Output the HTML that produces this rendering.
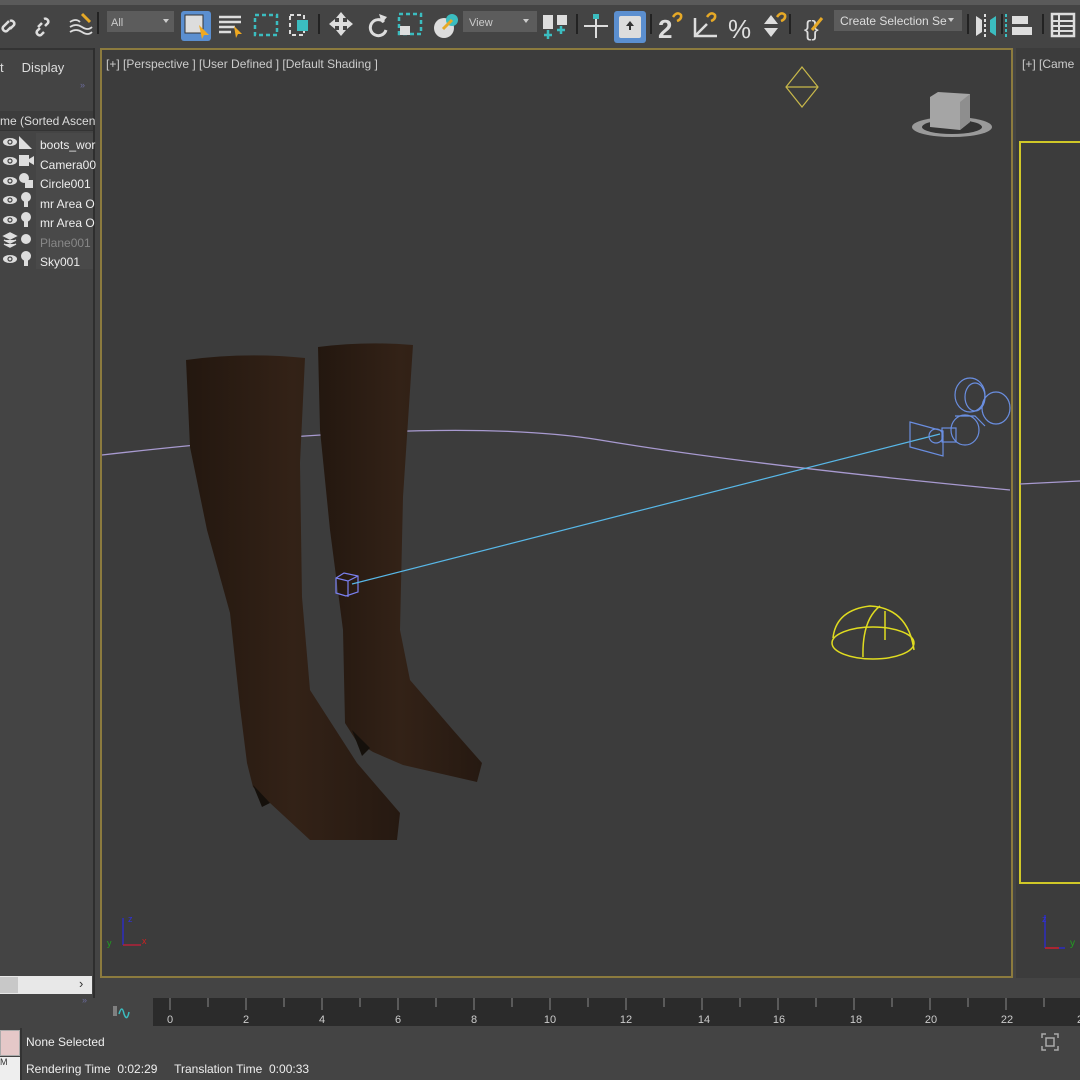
<!DOCTYPE html>
<html><head><meta charset="utf-8">
<style>
*{margin:0;padding:0;box-sizing:border-box}
body{width:1080px;height:1080px;overflow:hidden;background:#444444;font-family:"Liberation Sans",sans-serif;color:#ddd;position:relative;font-size:12px}
.a{position:absolute}
.t{position:absolute;white-space:nowrap}
</style></head><body>
<div class="a" style="left:0;top:0;width:1080px;height:5px;background:#5a5a5a"></div>
<div class="a" style="left:0;top:5px;width:1080px;height:41px;background:#444"></div>
<svg class="a" style="left:0;top:0" width="1080" height="48">
 <g fill="none" stroke="#ddd" stroke-width="2.5">
  <path d="M3 27 l6-6 M10 21 a3 3 0 0 1 4 4 l-4 4 M5 25 l-2 2 a3 3 0 0 0 4 4 l4-4"/>
  <path d="M38 27 l4-4 M44 19 a3 3 0 0 1 4 4 l-3 3 M40 28 l-3 3 a3 3 0 0 0 4 4 l3-3" />
  <path d="M70 27 q6 -4 12 0 q6 4 10 0 M70 32 q6 -4 12 0 q6 4 10 0 M70 22 q6-4 10 0" stroke-width="1.8"/>
 </g>
 <path d="M82 14 l8 8" stroke="#e6a927" stroke-width="3"/>
 <line x1="98" y1="12" x2="98" y2="34" stroke="#222" stroke-width="2"/>
 <rect x="107" y="11" width="67" height="21" fill="#5c5c5c"/>
 <text x="111" y="26" fill="#ccc" font-size="11" font-family="Liberation Sans">All</text>
 <path d="M163 19 l6 0 l-3 4z" fill="#ccc"/>
 <rect x="181" y="11" width="30" height="30" rx="3" fill="#5b8fd0"/>
 <rect x="185" y="15" width="18" height="18" fill="#ddd" stroke="#333"/>
 <path d="M199 25 l10 10 l-5 0 l-2 4z" fill="#f0a920"/>
 <path d="M219 17h22M219 22h22M219 27h16M219 32h12" stroke="#ddd" stroke-width="2.5"/>
 <path d="M234 26 l8 8 l-4 0 l-2 4z" fill="#f0a920"/>
 <rect x="255" y="15" width="22" height="20" fill="none" stroke="#3bbdc0" stroke-width="2.5" stroke-dasharray="4 3"/>
 <rect x="290" y="15" width="14" height="20" fill="none" stroke="#ddd" stroke-width="2" stroke-dasharray="4 3"/>
 <rect x="297" y="20" width="11" height="11" fill="#3bbdc0"/>
 <line x1="319" y1="14" x2="319" y2="34" stroke="#222" stroke-width="2"/>
 <path d="M341 12 l5 6 h-3 v4 h4 v-3 l6 5 l-6 5 v-3 h-4 v4 h3 l-5 6 l-5-6 h3 v-4 h-4 v3 l-6-5 l6-5 v3 h4 v-4 h-3z" fill="#ddd"/>
 <path d="M384 22 a8 8 0 1 0 2 8" fill="none" stroke="#ddd" stroke-width="3"/>
 <path d="M379 14 l8 3 l-5 6z" fill="#ddd"/>
 <rect x="399" y="14" width="22" height="20" fill="none" stroke="#3bbdc0" stroke-width="2.5" stroke-dasharray="4 3"/>
 <rect x="400" y="26" width="10" height="9" fill="#ddd"/>
 <circle cx="444" cy="28" r="10" fill="#ddd"/>
 <circle cx="452" cy="20" r="6" fill="#3bbdc0"/>
 <path d="M443 29 l9 -9" stroke="#e6a927" stroke-width="3"/>
 <rect x="463" y="11" width="74" height="21" fill="#5c5c5c"/>
 <text x="469" y="26" fill="#ccc" font-size="11" font-family="Liberation Sans">View</text>
 <path d="M523 19 l6 0 l-3 4z" fill="#ccc"/>
 <rect x="543" y="15" width="10" height="14" fill="#ddd"/><rect x="557" y="15" width="10" height="10" fill="#ddd"/>
 <path d="M548 30v9M544 35h8M561 26v8M557 30h8" stroke="#3bbdc0" stroke-width="2.5"/>
 <line x1="577" y1="14" x2="577" y2="34" stroke="#222" stroke-width="2"/>
 <path d="M596 14v24M584 26h24" stroke="#ddd" stroke-width="2"/>
 <rect x="593" y="14" width="6" height="5" fill="#3bbdc0"/>
 <rect x="614" y="11" width="32" height="32" rx="3" fill="#5b8fd0"/>
 <rect x="619" y="16" width="22" height="22" rx="2" fill="#ddd"/>
 <path d="M630 21 l4 5 h-3 v4 h-2 v-4 h-3z" fill="#333"/>
 <line x1="651" y1="14" x2="651" y2="34" stroke="#222" stroke-width="2"/>
 <text x="658" y="38" fill="#ddd" font-size="26" font-weight="bold" font-family="Liberation Sans">2</text>
 <path d="M673 17 q4-6 8-2 q1 4-4 6" fill="none" stroke="#e6a927" stroke-width="2.5"/>
 <path d="M695 18v18h22 M695 36 l12-12" fill="none" stroke="#ddd" stroke-width="2.5"/>
 <path d="M707 17 q4-6 8-2 q1 4-4 6" fill="none" stroke="#e6a927" stroke-width="2.5"/>
 <text x="728" y="38" fill="#ddd" font-size="26" font-family="Liberation Sans">%</text>
 <path d="M764 24 l7-9 l7 9z M764 28 h14 l-7 9z" fill="#ddd"/>
 <path d="M777 17 q4-6 8-2 q1 4-4 6" fill="none" stroke="#e6a927" stroke-width="2.5"/>
 <line x1="790" y1="14" x2="790" y2="34" stroke="#222" stroke-width="2"/>
 <text x="804" y="36" fill="#ddd" font-size="22" font-family="Liberation Sans">{}</text>
 <path d="M812 30 l10-12" stroke="#e6a927" stroke-width="3"/>
 <rect x="834" y="10" width="128" height="21" fill="#5c5c5c"/>
 <text x="840" y="25" fill="#ddd" font-size="12" font-family="Liberation Sans">Create Selection Se</text>
 <path d="M948 18 l6 0 l-3 4z" fill="#ccc"/>
 <line x1="968" y1="14" x2="968" y2="34" stroke="#222" stroke-width="2"/>
 <path d="M976 16 l6 4 v12 l-6 4z" fill="#ddd"/><path d="M985 14v24" stroke="#ddd" stroke-width="2" stroke-dasharray="3 2"/><path d="M996 16 l-6 4 v12 l6 4z" fill="#3bbdc0"/>
 <line x1="1002" y1="14" x2="1002" y2="34" stroke="#222" stroke-width="2"/>
 <path d="M1006 14v24" stroke="#3bbdc0" stroke-width="2" stroke-dasharray="3 2"/>
 <rect x="1012" y="16" width="16" height="8" fill="#ddd"/><rect x="1012" y="27" width="20" height="8" fill="#ddd"/>
 <line x1="1043" y1="14" x2="1043" y2="34" stroke="#222" stroke-width="2"/>
 <rect x="1052" y="14" width="22" height="22" fill="none" stroke="#ddd" stroke-width="2.5"/>
 <path d="M1052 21h22M1052 26h22M1052 31h22M1059 14v22" stroke="#ddd" stroke-width="2"/>
</svg>

<div class="a" style="left:0;top:48px;width:95px;height:950px;background:#444;border-right:2px solid #2e2e2e"></div>
<div class="a" style="left:0;top:48px;width:93px;height:2px;background:#333"></div>
<div class="t" style="left:0;top:60px;font-size:13px;color:#ddd">t&nbsp;&nbsp;&nbsp;&nbsp;&nbsp;Display</div>
<div class="t" style="left:80px;top:80px;font-size:9px;color:#6a6a9a">»</div>
<div class="a" style="left:0;top:111px;width:93px;height:20px;background:#3c3c3c;border-bottom:1px solid #333"></div>
<div class="t" style="left:0;top:114px;font-size:12px;color:#ddd">me (Sorted Ascen</div>
<div class="a" style="left:36px;top:133px;width:57px;height:136px;background:#494949"></div>
<svg class="a" style="left:0;top:132px" width="40" height="140">
 <g fill="#ddd">
  <ellipse cx="10" cy="10" rx="7" ry="4"/><ellipse cx="10" cy="29" rx="7" ry="4"/><ellipse cx="10" cy="49" rx="7" ry="4"/><ellipse cx="10" cy="68" rx="7" ry="4"/><ellipse cx="10" cy="88" rx="7" ry="4"/><ellipse cx="10" cy="127" rx="7" ry="4"/>
  <path d="M19 4 l13 13 h-13z"/>
  <rect x="19" y="23" width="10" height="11"/><path d="M29 27 l5-3 v9 l-5-3z"/>
  <circle cx="24" cy="46" r="5"/><rect x="25" y="48" width="8" height="8"/>
  <circle cx="26" cy="65" r="5"/><rect x="24" y="69" width="4" height="6"/>
  <circle cx="26" cy="85" r="5"/><rect x="24" y="89" width="4" height="6"/>
  <path d="M4 104 l6-3 l6 3 l-6 3z M4 108 l6 3 l6-3 M4 112 l6 3 l6-3" stroke="#ddd" stroke-width="1.5"/>
  <circle cx="26" cy="107" r="5"/>
  <circle cx="26" cy="124" r="5"/><rect x="24" y="128" width="4" height="6"/>
 </g>
 <g fill="none" stroke="#444" stroke-width="1.2"><circle cx="10" cy="10" r="2"/><circle cx="10" cy="29" r="2"/><circle cx="10" cy="49" r="2"/><circle cx="10" cy="68" r="2"/><circle cx="10" cy="88" r="2"/><circle cx="10" cy="127" r="2"/></g>
</svg>
<div class="t" style="left:40px;top:136px;font-size:12px;color:#eee;line-height:19.5px">boots_wor<br>Camera00<br>Circle001<br>mr Area O<br>mr Area O<br><span style="color:#888">Plane001</span><br>Sky001</div>
<div class="a" style="left:0;top:976px;width:92px;height:18px;background:#e8e8e8"></div>
<div class="a" style="left:0;top:977px;width:18px;height:16px;background:#c8c8c8"></div>
<div class="t" style="left:79px;top:976px;font-size:13px;color:#333">›</div>
<div class="t" style="left:82px;top:995px;font-size:9px;color:#6a6a9a">»</div>

<div class="a" style="left:100px;top:48px;width:913px;height:930px;background:#3c3c3c;border:2px solid #8c7b3e"></div>
<div class="t" style="left:106px;top:57px;font-size:12px;color:#ccc">[+] [Perspective ] [User Defined ] [Default Shading ]</div>

<div class="a" style="left:1016px;top:48px;width:64px;height:930px;background:#3c3c3c"></div>
<div class="t" style="left:1022px;top:57px;font-size:12px;color:#ccc">[+] [Came</div>
<div class="a" style="left:1019px;top:141px;width:70px;height:743px;border:2px solid #d0c828"></div>

<svg class="a" style="left:0;top:0" width="1080" height="1080">
 <path d="M102 455 Q450 415 600 440 T1010 490" fill="none" stroke="#a89ad0" stroke-width="1.3"/>
 <path d="M1020 484 L1080 481" stroke="#a89ad0" stroke-width="1.3"/>
 <defs><linearGradient id="g" x1="0" x2="1"><stop offset="0" stop-color="#23170f"/><stop offset=".5" stop-color="#332217"/><stop offset="1" stop-color="#261911"/></linearGradient></defs>
 <path d="M318 347 Q366 341 413 345 L403 497 L400 630 L410 680 L453 730 L482 763 L477 782 L403 765 L373 752 L357 742 L345 723 L343 630 L330 530 L320 430Z" fill="url(#g)"/>
 <path d="M352 730 l18 18 l-8 8z" fill="#15100b"/>
 <path d="M186 360 Q245 352 305 358 L300 463 L302 597 L310 690 L357 763 L400 813 L397 840 L310 840 L270 803 L253 787 L247 763 L240 707 L230 613 L207 530 L190 447Z" fill="url(#g)"/>
 <path d="M253 785 l17 18 l-8 4z" fill="#15100b"/>
 <path d="M336 578 l8-5 l14 3 v16 l-12 4 l-10-3z M336 578 l12 3 l10-5 M348 581 v16" fill="none" stroke="#7a80f0" stroke-width="1.2"/>
 <path d="M352 584 L940 434" stroke="#58b8e8" stroke-width="1.2"/>
 <g fill="none" stroke="#6a8ee0" stroke-width="1.2">
  <path d="M910 422 l33 9 v25 l-33-9z"/>
  <ellipse cx="936" cy="436" rx="7" ry="7"/>
  <rect x="942" y="428" width="14" height="14"/>
  <ellipse cx="970" cy="395" rx="15" ry="17"/><ellipse cx="975" cy="397" rx="10" ry="14"/>
  <ellipse cx="996" cy="408" rx="14" ry="16"/>
  <ellipse cx="965" cy="430" rx="14" ry="15"/>
  <path d="M955 416 l20 0 l10 10"/>
 </g>
 <g fill="none" stroke="#e0dc20" stroke-width="1.5">
  <ellipse cx="873" cy="643" rx="41" ry="16"/>
  <path d="M833 638 Q836 610 870 606 Q908 608 914 650"/>
  <path d="M863 657 Q862 620 880 606 M885 611 Q885 628 885 640"/>
 </g>
 <path d="M802 67 l16 20 l-16 20 l-16-20z M786 87 h32" fill="none" stroke="#c8b84a" stroke-width="1.2"/>
 <ellipse cx="952" cy="127" rx="40" ry="10" fill="#9a9a9a"/>
 <ellipse cx="952" cy="127" rx="30" ry="7" fill="#333"/>
 <path d="M930 97 l8-5 l32 2 v28 l-10 8 l-30-3z" fill="#a5a5a5"/>
 <path d="M960 102 l10-8 v28 l-10 8z" fill="#8e8e8e"/>
 <path d="M123 945 V918 M123 945 h18" stroke="#2a2ae0" stroke-width="1.2"/>
 <path d="M123 945 h18" stroke="#d02020" stroke-width="1.2"/>
 <text x="128" y="922" fill="#3030e0" font-size="9">z</text><text x="107" y="946" fill="#20a020" font-size="9">y</text><text x="142" y="944" fill="#d02020" font-size="9">x</text>
 <path d="M1045 948 V915 M1045 948 h20" stroke="#2a2ae0" stroke-width="1.2"/>
 <path d="M1045 948 h14" stroke="#d02020" stroke-width="1.5"/>
 <text x="1042" y="922" fill="#3030e0" font-size="9">z</text><text x="1070" y="946" fill="#20a020" font-size="10">y</text>
</svg>

<div class="a" style="left:96px;top:998px;width:984px;height:28px;background:#444"></div>
<div class="a" style="left:153px;top:998px;width:927px;height:28px;background:#2b2b2b"></div>
<svg class="a" style="left:0;top:996px" width="1080" height="32">
 <path d="M114 10v10M116 10v10" stroke="#bbb"/>
 <path d="M119 18 q3-10 5 0 q3 8 5-2" fill="none" stroke="#3bbdc0" stroke-width="1.5"/>
 <g stroke="#888" stroke-width="1">
 <path d="M170 2v12M208 2v9M246 2v12M284 2v9M322 2v12M360 2v9M398 2v12M436 2v9M474 2v12M512 2v9M550 2v12M588 2v9M626 2v12M664 2v9M702 2v12M740 2v9M778 2v12M816 2v9M854 2v12M892 2v9M930 2v12M968 2v9M1006 2v12M1044 2v9"/>
 </g>
 <g fill="#ccc" font-size="11" font-family="Liberation Sans" text-anchor="middle">
 <text x="170" y="27">0</text><text x="246" y="27">2</text><text x="322" y="27">4</text><text x="398" y="27">6</text><text x="474" y="27">8</text><text x="550" y="27">10</text><text x="626" y="27">12</text><text x="704" y="27">14</text><text x="779" y="27">16</text><text x="856" y="27">18</text><text x="931" y="27">20</text><text x="1007" y="27">22</text><text x="1080" y="27">2</text>
 </g>
</svg>
<div class="a" style="left:0;top:1030px;width:20px;height:26px;background:#e5c8c8;border:1px solid #aaa"></div>
<div class="a" style="left:0;top:1057px;width:20px;height:23px;background:#eee;font-size:9px;color:#333">M</div>
<div class="a" style="left:20px;top:1028px;width:2px;height:52px;background:#333"></div>
<div class="t" style="left:26px;top:1035px;font-size:12px;color:#eee">None Selected</div>
<div class="t" style="left:26px;top:1062px;font-size:12px;color:#eee">Rendering Time&nbsp; 0:02:29&nbsp;&nbsp;&nbsp;&nbsp;&nbsp;Translation Time&nbsp; 0:00:33</div>
<svg class="a" style="left:1040px;top:1032px" width="40" height="20">
 <path d="M2 6V2h4M14 2h4v4M18 14v4h-4M6 18H2v-4" fill="none" stroke="#aaa" stroke-width="1.5"/><rect x="6" y="6" width="8" height="8" fill="none" stroke="#aaa" stroke-width="1.5"/>
</svg>
</body></html>
